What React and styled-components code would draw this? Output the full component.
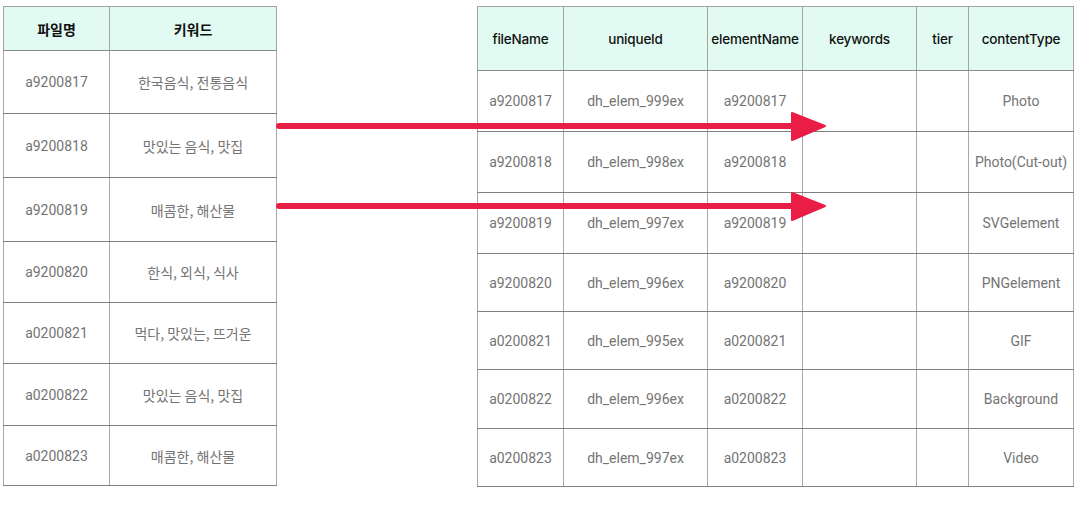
import React from "react";
import styled, { createGlobalStyle } from "styled-components";

const GlobalStyle = createGlobalStyle`
    body {
        margin: 0;
        background: #ffffff;
        font-family: Roboto, "Noto Sans CJK KR", sans-serif;
    }
`;

const sourceRows = [
    ["a9200817", "한국음식, 전통음식"],
    ["a9200818", "맛있는 음식, 맛집"],
    ["a9200819", "매콤한, 해산물"],
    ["a9200820", "한식, 외식, 식사"],
    ["a0200821", "먹다, 맛있는, 뜨거운"],
    ["a0200822", "맛있는 음식, 맛집"],
    ["a0200823", "매콤한, 해산물"],
];
const sourceHeights = [63, 64, 64, 61, 61, 62, 60];

const targetRows = [
    ["a9200817", "dh_elem_999ex", "a9200817", "", "", "Photo"],
    ["a9200818", "dh_elem_998ex", "a9200818", "", "", "Photo(Cut-out)"],
    ["a9200819", "dh_elem_997ex", "a9200819", "", "", "SVGelement"],
    ["a9200820", "dh_elem_996ex", "a9200820", "", "", "PNGelement"],
    ["a0200821", "dh_elem_995ex", "a0200821", "", "", "GIF"],
    ["a0200822", "dh_elem_996ex", "a0200822", "", "", "Background"],
    ["a0200823", "dh_elem_997ex", "a0200823", "", "", "Video"],
];
const targetHeights = [61, 61, 61, 58, 58, 59, 58];
const targetCols = [86, 144, 95, 114, 52, 105];
const targetHeads = ["fileName", "uniqueId", "elementName", "keywords", "tier", "contentType"];

// arrows go from the left table into the keywords column
const arrows = [126, 206];

const App = () => {
    return (
        <Page>
            <GlobalStyle />
            <Grid $width={273}>
                <colgroup>
                    <col style={{ width: 106 }} />
                    <col style={{ width: 167 }} />
                </colgroup>
                <thead>
                    <Row $h={44}>
                        <Head>파일명</Head>
                        <Head>키워드</Head>
                    </Row>
                </thead>
                <tbody>
                    {sourceRows.map((r, i) => (
                        <Row key={r[0] + i} $h={sourceHeights[i]}>
                            <Cell>{r[0]}</Cell>
                            <Cell $kr>{r[1]}</Cell>
                        </Row>
                    ))}
                </tbody>
            </Grid>

            <Grid $width={596}>
                <colgroup>
                    {targetCols.map((w, i) => (
                        <col key={i} style={{ width: w }} />
                    ))}
                </colgroup>
                <thead>
                    <Row $h={64}>
                        {targetHeads.map((h) => (
                            <Head key={h} $latin>{h}</Head>
                        ))}
                    </Row>
                </thead>
                <tbody>
                    {targetRows.map((r, i) => (
                        <Row key={r[0] + i} $h={targetHeights[i]}>
                            {r.map((v, j) => (
                                <Cell key={j}>{v}</Cell>
                            ))}
                        </Row>
                    ))}
                </tbody>
            </Grid>

            <Arrows width="1080" height="520" viewBox="0 0 1080 520">
                {arrows.map((y) => (
                    <g key={y}>
                        <line x1="279" y1={y} x2="796" y2={y} stroke="#e91d45" strokeWidth="6" strokeLinecap="round" />
                        <path
                            d={`M792 ${y - 13} L825 ${y} L792 ${y + 14} Z`}
                            fill="#e91d45"
                            stroke="#e91d45"
                            strokeWidth="2"
                            strokeLinejoin="round"
                        />
                    </g>
                ))}
            </Arrows>
        </Page>
    );
};

const Page = styled.div`
    position: relative;
    width: 1080px;
    height: 520px;
    display: flex;
    align-items: flex-start;
    gap: 200px;
    padding: 6px 0 0 3px;
    box-sizing: border-box;
`;

const Grid = styled.table`
    width: ${(p) => p.$width}px;
    table-layout: fixed;
    border-collapse: collapse;
    border-spacing: 0;
    flex-shrink: 0;
`;

const Row = styled.tr`
    height: ${(p) => p.$h}px;
`;

const Head = styled.th`
    background: #e1fbf2;
    border: 1px solid #a3a3a3;
    border-bottom-color: #8a8a8a;
    color: #111111;
    font-family: ${(p) => (p.$latin ? `Inter, "Noto Sans", sans-serif` : `"Noto Sans CJK KR", sans-serif`)};
    font-size: ${(p) => (p.$latin ? 13.5 : 14)}px;
    font-weight: ${(p) => (p.$latin ? 500 : 700)};
    letter-spacing: ${(p) => (p.$latin ? "-0.2px" : "0")};
    text-align: center;
    padding: 0 1px;
    white-space: nowrap;
`;

const Cell = styled.td`
    border: 1px solid #a8a8a8;
    border-top-color: #808080;
    border-bottom-color: #808080;
    color: #747474;
    font-family: ${(p) => (p.$kr ? `"Noto Sans CJK KR", sans-serif` : `Roboto, "Noto Sans CJK KR", sans-serif`)};
    font-size: 14px;
    text-align: center;
    padding: 0 2px;
    white-space: nowrap;
`;

const Arrows = styled.svg`
    position: absolute;
    left: 0;
    top: 0;
    pointer-events: none;
`;

export default App;
